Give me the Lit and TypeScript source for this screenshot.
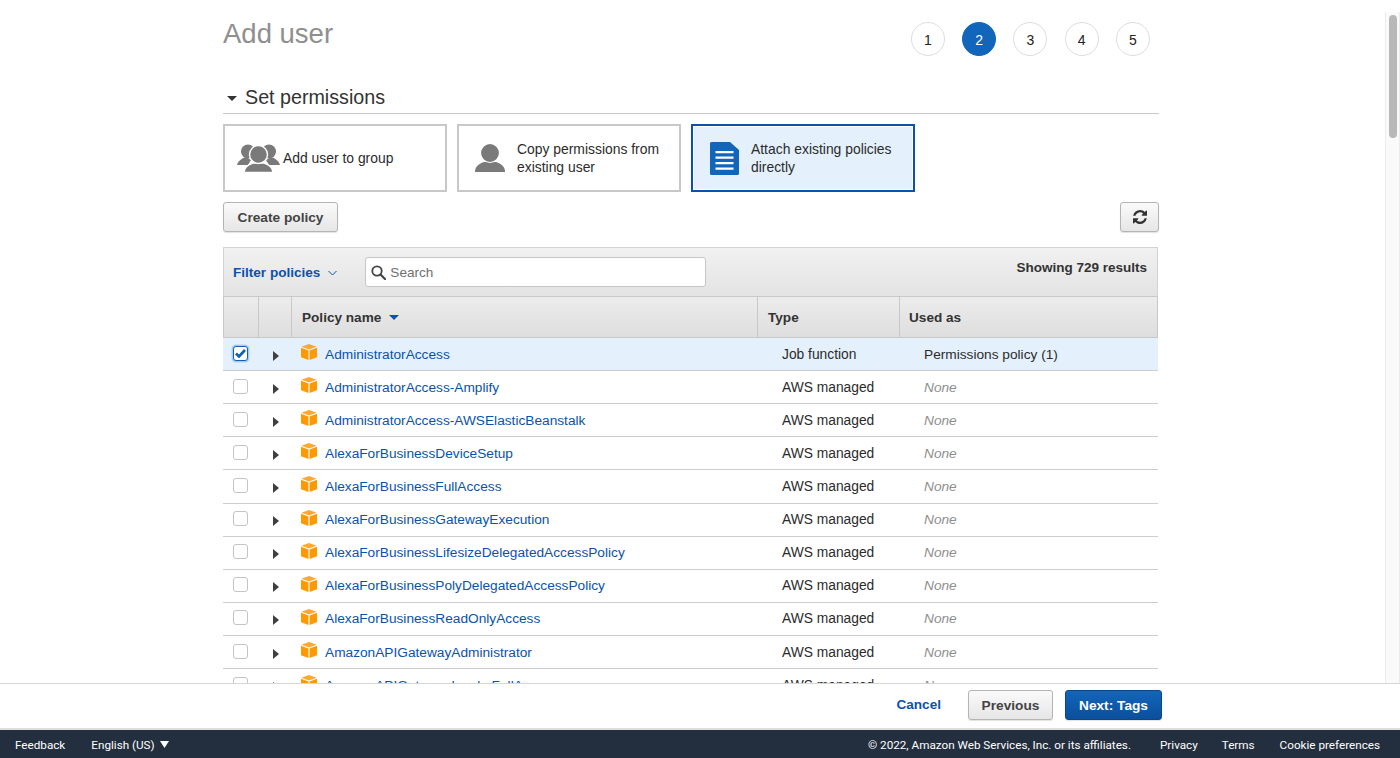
import { LitElement, html, css } from "lit";
import { customElement } from "lit/decorators.js";

const POLICIES = [
  ["AdministratorAccess", "Job function", "Permissions policy (1)"],
  ["AdministratorAccess-Amplify", "AWS managed", ""],
  ["AdministratorAccess-AWSElasticBeanstalk", "AWS managed", ""],
  ["AlexaForBusinessDeviceSetup", "AWS managed", ""],
  ["AlexaForBusinessFullAccess", "AWS managed", ""],
  ["AlexaForBusinessGatewayExecution", "AWS managed", ""],
  ["AlexaForBusinessLifesizeDelegatedAccessPolicy", "AWS managed", ""],
  ["AlexaForBusinessPolyDelegatedAccessPolicy", "AWS managed", ""],
  ["AlexaForBusinessReadOnlyAccess", "AWS managed", ""],
  ["AmazonAPIGatewayAdministrator", "AWS managed", ""],
  ["AmazonAPIGatewayInvokeFullAccess", "AWS managed", ""],
];

const cube = html`<svg class="cube" viewBox="0 0 16 16"><path fill="#ffa733" d="M8 0l7.600 2.800L8 5.600.4 2.800z"/><path fill="#f90" d="M0 3.800l7.400 2.800V16L0 13.200zM16 3.800L8.600 6.600V16l7.400-2.800z"/></svg>`;

const caretRight = html`<svg class="exp" viewBox="0 0 6 10"><path fill="#3f3f3f" d="M0 0l6 5-6 5z"/></svg>`;

const groupIcon = html`<svg class="group" viewBox="0 0 43 28"><g fill="#7a7a7a"><circle cx="11" cy="7.500" r="7"/><circle cx="32" cy="7.500" r="7"/><path d="M0 21c1-4 5-7 9-8l5 3-3 5zM43 21c-1-4-5-7-9-8l-5 3 3 5z"/></g><path fill="#7a7a7a" stroke="#fff" stroke-width="1.400" d="M7 28.500c0-5 3-7.500 9-9.500h11c6 2 9 4.500 9 9.500z"/><circle cx="21.500" cy="10.500" r="9" fill="#7a7a7a" stroke="#fff" stroke-width="1.400"/></svg>`;

const personIcon = html`<svg class="person" viewBox="0 0 30 28"><path fill="#7a7a7a" d="M0 28c0-5 3-8 9-10h12c6 2 9 5 9 10z"/><circle cx="15" cy="9" r="9.500" fill="#7a7a7a" stroke="#fff" stroke-width="1.200"/></svg>`;

const docIcon = html`<svg class="doc" viewBox="0 0 29 33"><path fill="#1166bb" d="M1.500 0H20l9 8v23.500a1.500 1.500 0 0 1-1.500 1.500h-26A1.500 1.500 0 0 1 0 31.500v-30A1.500 1.500 0 0 1 1.500 0z"/><path fill="#fff" d="M5.500 9h18v2.200h-18zM5.500 14.500h18v2.200h-18zM5.500 20h18v2.200h-18zM5.500 25.500h18v2.200h-18z"/></svg>`;

const refreshIcon = html`<svg class="refresh" viewBox="128 128 1536 1536"><path fill="#333" d="M1639 1056q0 5-1 7-64 268-268 434.500t-478 166.500q-146 0-282.500-55t-243.500-157l-129 129q-19 19-45 19t-45-19-19-45v-448q0-26 19-45t45-19h448q26 0 45 19t19 45-19 45l-137 137q71 66 161 102t187 36q134 0 250-65t186-179q11-17 53-117 8-23 30-23h192q13 0 22.500 9.500t9.500 22.500zm25-800v448q0 26-19 45t-45 19h-448q-26 0-45-19t-19-45 19-45l138-138q-148-137-349-137-134 0-250 65t-186 179q-11 17-53 117-8 23-30 23h-199q-13 0-22.500-9.500t-9.500-22.500v-7q65-268 270-434.500t480-166.500q146 0 284 55.500t245 156.500l130-129q19-19 45-19t45 19 19 45z"/></svg>`;

const searchIcon = html`<svg class="search" viewBox="0 0 15 15"><circle cx="6" cy="6" r="4.700" fill="none" stroke="#444" stroke-width="1.800"/><path d="M9.500 9.500L14 14" stroke="#444" stroke-width="2.200" stroke-linecap="round"/></svg>`;

@customElement("app-root")
export class AppRoot extends LitElement {
  static styles = css`
    :host {
      display: flex;
      flex-direction: column;
      height: 100vh;
      position: relative;
      overflow: hidden;
      font-family: "Liberation Sans", Arial, sans-serif;
      font-size: 14px;
      color: #2b2b2b;
      background: #fff;
    }
    .main { flex: 1; min-height: 0; overflow: hidden; padding-left: 223px; }
    .content { width: 936px; }
    .top { display: flex; justify-content: space-between; align-items: flex-start; height: 84px; }
    .title { margin: 18px 0 0; font-size: 27.500px; line-height: 32px; font-weight: 400; color: #8f8f8f; }
    .steps { display: flex; gap: 17.300px; padding: 22px 9px 0 0; }
    .step { width: 32px; height: 32px; border: 1px solid #ddd; border-radius: 50%; display: flex; align-items: center; justify-content: center; color: #222; padding-top: 1px; box-sizing: content-box; height: 31px; }
    .step.on { background: #1166bb; border-color: #1166bb; color: #fff; }
    .section { display: flex; align-items: center; height: 29px; padding-bottom: 2px; box-sizing: border-box; height: 30px; border-bottom: 1px solid #c8c8c8; font-size: 19.700px; color: #333; }
    .section svg { width: 10px; height: 5px; margin: 2px 8px 0 4px; }
    .cards { display: flex; gap: 10px; margin-top: 10px; }
    .card { box-sizing: border-box; width: 224px; height: 68px; border: 2px solid #c8c8c8; display: flex; align-items: center; line-height: 18px; font-size: 13.900px; }
    .card.first { padding-left: 12px; gap: 3px; }
    .card.second { padding-left: 16px; gap: 12px; }
    .card.third { padding-left: 17px; gap: 12px; border-color: #0b52ae; background: #e4f1fd; box-shadow: inset 0 0 0 1px #fff; }
    .group { width: 43px; height: 28px; flex: none; }
    .person { width: 30px; height: 28px; flex: none; }
    .doc { width: 29px; height: 33px; flex: none; }
    .actions { display: flex; justify-content: space-between; margin-top: 10px; }
    .btn { box-sizing: border-box; height: 30px; border: 1px solid #b4b4b4; border-radius: 3px; background: linear-gradient(#fafafa, #e6e6e6); font: bold 13.700px "Liberation Sans", Arial, sans-serif; color: #444; display: flex; align-items: center; justify-content: center; box-shadow: 0 1px 1px rgba(0,0,0,.12); }
    .create { width: 115px; }
    .reload { width: 39px; }
    .refresh { width: 14px; height: 14px; }
    .toolbar { box-sizing: border-box; margin: 15px 1px 0 0; height: 50px; display: flex; align-items: center; border: 1px solid #d2d2d2; border-bottom: 1px solid #c8c8c8; background: linear-gradient(#f1f1f1, #e3e3e3); padding-left: 9px; }
    .filter { font-weight: bold; font-size: 13.550px; color: #0a52ab; }
    .chev { width: 9px; height: 6px; margin: 2px 28px 0 8px; }
    .box { box-sizing: border-box; width: 341px; height: 30px; background: #fff; border: 1px solid #c6c6c6; border-radius: 3px; display: flex; align-items: center; padding-left: 5px; gap: 4px; color: #707070; font-size: 13.600px; }
    .search { width: 15px; height: 15px; }
    .count { margin-left: auto; padding: 0 10px 9px 0; font-weight: bold; font-size: 13.500px; color: #333; }
    .cols { display: grid; grid-template-columns: 35px 33px 466px 142px 1fr; }
    .head { height: 41px; background: linear-gradient(#ececec, #dedede); border: solid #c8c8c8; border-width: 0 1px 1px 1px; margin-right: 1px; box-sizing: border-box; font-weight: bold; font-size: 13.600px; color: #333; }
    .head > div { display: flex; align-items: center; padding: 1px 0 0 10px; border-right: 1px solid #c8c8c8; }
    .head > div:last-child { border-right: 0; padding-left: 9px; }
    .sort { width: 10px; height: 5px; margin-left: 8px; }
    .row { box-sizing: border-box; height: 33.120px; border-bottom: 1px solid #cdcdcd; margin-right: 1px; }
    .row > div { display: flex; align-items: center; }
    .row.sel { background: #e4f1fd; }
    .cb { box-sizing: border-box; width: 15px; height: 15px; margin: -2px 0 0 10px; border: 1px solid #c4c4c4; border-radius: 3px; background: #fff; display: flex; align-items: center; justify-content: center; }
    .sel .cb { border-color: #0f5fbd; box-shadow: 0 0 0 1.500px #a9cdf2; }
    .cb svg { width: 11px; height: 9px; }
    .exp { width: 6px; height: 10px; margin: 3px 0 0 15px; }
    .cube { width: 16px; height: 16px; margin: -4px 8px 0 10px; flex: none; }
    a { color: #0a52ab; text-decoration: none; white-space: nowrap; }
    .row a { font-size: 13.700px; }
    .type { padding-left: 25px; font-size: 13.800px; }
    .used { padding-left: 25px; font-size: 13.700px; }
    .none { color: #8e8e8e; font-style: italic; }
    .bar { box-sizing: border-box; flex: none; height: 47px; border-top: 1px solid #d6d6d6; border-bottom: 2px solid #dedede; background: #fff; display: flex; justify-content: flex-end; align-items: flex-start; padding: 6px 238px 0 0; z-index: 1; }
    .cancel { font-weight: bold; font-size: 13.600px; line-height: 30px; margin-right: 27px; }
    .prev { width: 85px; margin-right: 12px; }
    .next { width: 97px; background: linear-gradient(#1166bb, #0b4f9c); border-color: #0a4688; color: #fff; }
    footer { flex: none; height: 28px; padding: 1px 20px 0 15px; box-sizing: border-box; background: #232f3e; color: #fff; display: flex; align-items: center; font-family: Roboto, sans-serif; font-size: 11.700px; }
    .lang { margin-left: 26px; display: flex; align-items: center; gap: 5px; }
    .lang svg { width: 9px; height: 7px; }
    .copy { margin-left: auto; }
    .privacy { margin-left: 29px; }
    .terms { margin-left: 24px; }
    .cookie { margin-left: 25px; }
    .track { position: absolute; right: 0; top: 12px; width: 15px; height: 671px; box-sizing: border-box; background: #fafafa; border: solid #ececec; border-width: 0 1px 0 1px; }
    .thumb { position: absolute; left: 3px; top: 3px; width: 8px; height: 123px; border-radius: 4px; background: #b8b8b8; }
  `;

  render() {
    return html`
      <div class="main">
        <div class="content">
          <div class="top">
            <h1 class="title">Add user</h1>
            <div class="steps">
              ${[1, 2, 3, 4, 5].map((n) => html`<div class="step ${n === 2 ? "on" : ""}">${n}</div>`)}
            </div>
          </div>
          <div class="section">
            <svg viewBox="0 0 10 5"><path fill="#333" d="M0 0h10L5 5z"/></svg>
            Set permissions
          </div>
          <div class="cards">
            <div class="card first">${groupIcon}<span>Add user to group</span></div>
            <div class="card second">${personIcon}<span>Copy permissions from<br />existing user</span></div>
            <div class="card third">${docIcon}<span>Attach existing policies<br />directly</span></div>
          </div>
          <div class="actions">
            <div class="btn create">Create policy</div>
            <div class="btn reload">${refreshIcon}</div>
          </div>
          <div class="toolbar">
            <span class="filter">Filter policies</span>
            <svg class="chev" viewBox="0 0 9 6"><path d="M.5 1l4 4 4-4" fill="none" stroke="#0a52ab" stroke-width="1"/></svg>
            <div class="box">${searchIcon}<span>Search</span></div>
            <span class="count">Showing 729 results</span>
          </div>
          <div class="cols head">
            <div></div>
            <div></div>
            <div>Policy name<svg class="sort" viewBox="0 0 10 5"><path fill="#0a52ab" d="M0 0h10L5 5z"/></svg></div>
            <div>Type</div>
            <div>Used as</div>
          </div>
          ${POLICIES.map(
            ([name, type, used], i) => html`
              <div class="cols row ${i === 0 ? "sel" : ""}">
                <div>
                  <span class="cb">
                    ${i === 0
                      ? html`<svg viewBox="0 0 11 9"><path d="M1 4.500l3 3 6-6.500" fill="none" stroke="#0f5fbd" stroke-width="2.600"/></svg>`
                      : ""}
                  </span>
                </div>
                <div>${caretRight}</div>
                <div>${cube}<a href="#">${name}</a></div>
                <div class="type">${type}</div>
                <div class="used">${used ? used : html`<span class="none">None</span>`}</div>
              </div>
            `
          )}
        </div>
      </div>
      <div class="bar">
        <a class="cancel" href="#">Cancel</a>
        <div class="btn prev">Previous</div>
        <div class="btn next">Next: Tags</div>
      </div>
      <footer>
        <span>Feedback</span>
        <span class="lang">English (US)<svg viewBox="0 0 9 7"><path fill="#fff" d="M0 0h9L4.500 7z"/></svg></span>
        <span class="copy">© 2022, Amazon Web Services, Inc. or its affiliates.</span>
        <span class="privacy">Privacy</span>
        <span class="terms">Terms</span>
        <span class="cookie">Cookie preferences</span>
      </footer>
      <div class="track"><div class="thumb"></div></div>
    `;
  }
}
